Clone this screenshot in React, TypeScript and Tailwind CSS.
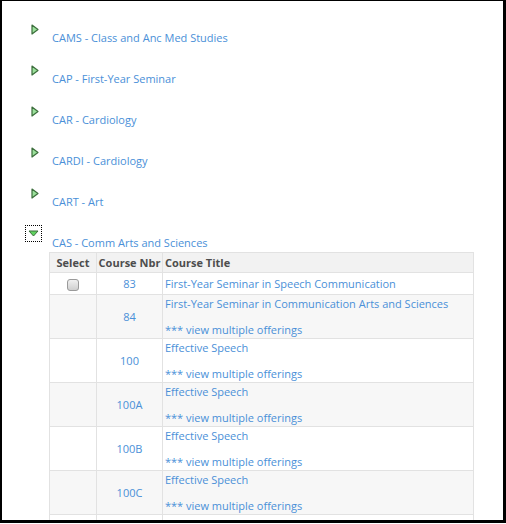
import React from 'react';

type Subject = { title: string };
type Course = { nbr: string; title: string; multi: boolean; select?: boolean };

const subjects: Subject[] = [
  { title: 'CAMS - Class and Anc Med Studies' },
  { title: 'CAP - First-Year Seminar' },
  { title: 'CAR - Cardiology' },
  { title: 'CARDI - Cardiology' },
  { title: 'CART - Art' },
];

const courses: Course[] = [
  { nbr: '83', title: 'First-Year Seminar in Speech Communication', multi: false, select: true },
  { nbr: '84', title: 'First-Year Seminar in Communication Arts and Sciences', multi: true },
  { nbr: '100', title: 'Effective Speech', multi: true },
  { nbr: '100A', title: 'Effective Speech', multi: true },
  { nbr: '100B', title: 'Effective Speech', multi: true },
  { nbr: '100C', title: 'Effective Speech', multi: true },
  { nbr: '100D', title: 'Effective Speech', multi: true },
];

const RightArrow = () => (
  <svg width="8" height="11" viewBox="0 0 8 11">
    <path d="M1 1 L7 5.5 L1 10 Z" fill="#9be09b" stroke="#3c6e3c" strokeWidth="1.2" strokeLinejoin="round" />
  </svg>
);

const DownArrow = () => (
  <svg width="11" height="7" viewBox="0 0 11 7">
    <path d="M1 1 L10 1 L5.5 6 Z" fill="#5fd35f" stroke="#3c6e3c" strokeWidth="1" strokeLinejoin="round" />
  </svg>
);

const App: React.FC = () => {
  return (
    <div
      className="w-[506px] h-[523px] overflow-hidden bg-white border-t border-l-2 border-r-[3px] border-b-[3px] border-black text-[11px] text-[#4a90d8]"
      style={{ fontFamily: '"Open Sans", "Liberation Sans", sans-serif' }}
    >
      <div className="pt-[23px] pl-[29px]">
        {subjects.map((s) => (
          <div key={s.title} className="flex h-[41px]">
            <div className="w-[21px]">
              <RightArrow />
            </div>
            <a className="mt-[7px] leading-[14px] h-[14px] cursor-pointer">{s.title}</a>
          </div>
        ))}
        <div className="flex h-[23px]">
          <div className="w-[21px]">
            <div className="-ml-[6px] -mt-[4px] w-[17px] h-[17px] border border-dotted border-black flex items-center justify-center">
              <DownArrow />
            </div>
          </div>
          <a className="mt-[7px] leading-[14px] h-[14px] cursor-pointer">CAS - Comm Arts and Sciences</a>
        </div>
        <table className="ml-[18px] w-[425px] table-fixed border-collapse border border-[#d9d9d9] leading-[13px]">
          <colgroup>
            <col className="w-[47px]" />
            <col className="w-[66px]" />
            <col />
          </colgroup>
          <thead>
            <tr className="bg-[#f2f2f2] h-[20px] text-[#4d4d4d]">
              <th className="border border-[#e2e2e2] font-bold text-center whitespace-nowrap">Select</th>
              <th className="border border-[#e2e2e2] font-bold text-center whitespace-nowrap">Course Nbr</th>
              <th className="border border-[#e2e2e2] font-bold text-left pl-[2px] whitespace-nowrap">Course Title</th>
            </tr>
          </thead>
          <tbody>
            {courses.map((c, i) => (
              <tr key={c.nbr} className={i % 2 === 1 ? 'bg-[#f7f7f7]' : 'bg-white'}>
                <td className={`border border-[#e2e2e2] text-center ${c.multi ? 'h-[44px]' : 'h-[22px]'}`}>
                  {c.select && (
                    <span className="inline-block align-middle w-[12px] h-[12px] rounded-[3px] border border-[#9a9a9a] bg-gradient-to-b from-[#f0f0f0] to-[#cfcfcf]" />
                  )}
                </td>
                <td className="border border-[#e2e2e2] text-center">{c.nbr}</td>
                <td className="border border-[#e2e2e2] pl-[2px] align-top whitespace-nowrap">
                  {c.multi ? (
                    <div className="pt-[2px] pb-[2px]">
                      <div>{c.title}</div>
                      <div className="h-[13px]" />
                      <div>*** view multiple offerings</div>
                    </div>
                  ) : (
                    <div className="pt-[4px]">{c.title}</div>
                  )}
                </td>
              </tr>
            ))}
          </tbody>
        </table>
      </div>
    </div>
  );
};

export default App;
